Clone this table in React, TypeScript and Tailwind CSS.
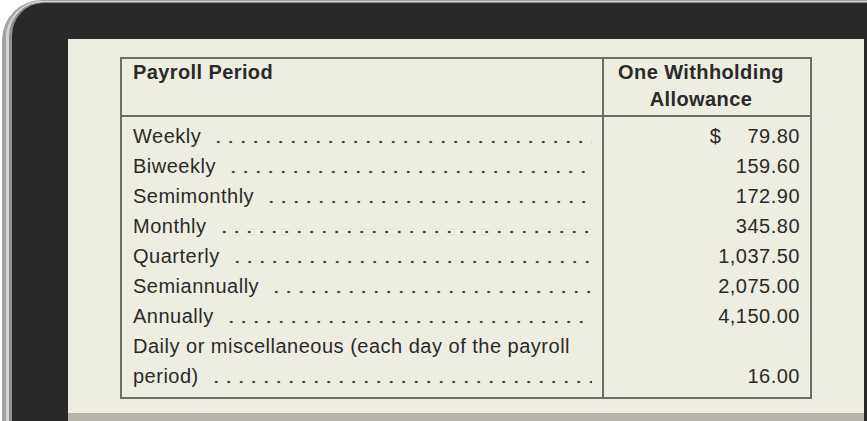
const rows = [
  { label: 'Weekly', amount: '79.80', dollar: true },
  { label: 'Biweekly', amount: '159.60' },
  { label: 'Semimonthly', amount: '172.90' },
  { label: 'Monthly', amount: '345.80' },
  { label: 'Quarterly', amount: '1,037.50' },
  { label: 'Semiannually', amount: '2,075.00' },
  { label: 'Annually', amount: '4,150.00' },
];

function Dots() {
  return (
    <span className="mb-[7px] ml-[11px] mr-[10px] h-[4px] flex-1 bg-[radial-gradient(circle,#3c3c3c_1px,transparent_1.6px)] bg-[length:12.5px_4px] bg-repeat-x" />
  );
}

export default function App() {
  return (
    <div className="h-[421px] w-[867px] overflow-hidden bg-white font-['Liberation_Sans',Arial,sans-serif] text-[#2a2a2a]">
      {/* tablet rim */}
      <div className="ml-[2px] h-full rounded-tl-[40px] border-l-[4px] border-t-[1px] border-[#a3a3a1]">
        <div className="h-full rounded-tl-[37px] border-l-[3px] border-t-[1px] border-[#d4d4d2]">
          <div className="flex h-full rounded-tl-[34px] border-l-[3px] border-t-[1px] border-[#8e8e8c] bg-[#2b2927] pl-[56px] pr-[3px] pt-[36px]">
            {/* screen */}
            <div className="flex h-full flex-1 flex-col bg-[#eeede2]">
              <div className="flex-1 pl-[52px] pt-[18px]">
                <div className="w-[692px] border-2 border-[#6c6c68]">
                  {/* header */}
                  <div className="flex h-[58px] border-b-2 border-[#6c6c68] text-[20px] font-bold leading-[27px] tracking-[0.4px]">
                    <div className="w-[482px] border-r-2 border-[#6c6c68] pl-[11px]">Payroll Period</div>
                    <div className="flex-1 pr-[12px] text-center">
                      One Withholding
                      <br />
                      Allowance
                    </div>
                  </div>
                  {/* body */}
                  <div className="flex text-[20px] leading-[30px] tracking-[0.5px]">
                    <div className="w-[482px] border-r-2 border-[#6c6c68] pb-[6px] pl-[11px] pt-[4px]">
                      {rows.map((r) => (
                        <div key={r.label} className="flex h-[30px] items-end">
                          <span className="leading-[30px]">{r.label}</span>
                          <Dots />
                        </div>
                      ))}
                      <div className="h-[30px] whitespace-nowrap">Daily or miscellaneous (each day of the payroll</div>
                      <div className="flex h-[30px] items-end">
                        <span className="leading-[30px]">period)</span>
                        <Dots />
                      </div>
                    </div>
                    <div className="flex-1 pb-[6px] pr-[10px] pt-[4px] text-right">
                      {rows.map((r) => (
                        <div key={r.label} className="flex h-[30px] justify-end">
                          {r.dollar && <span className="mr-[26px]">$</span>}
                          <span>{r.amount}</span>
                        </div>
                      ))}
                      <div className="h-[30px]" />
                      <div className="h-[30px]">16.00</div>
                    </div>
                  </div>
                </div>
              </div>
              <div className="h-[8px] bg-[#b7b4ab]" />
            </div>
          </div>
        </div>
      </div>
    </div>
  );
}
